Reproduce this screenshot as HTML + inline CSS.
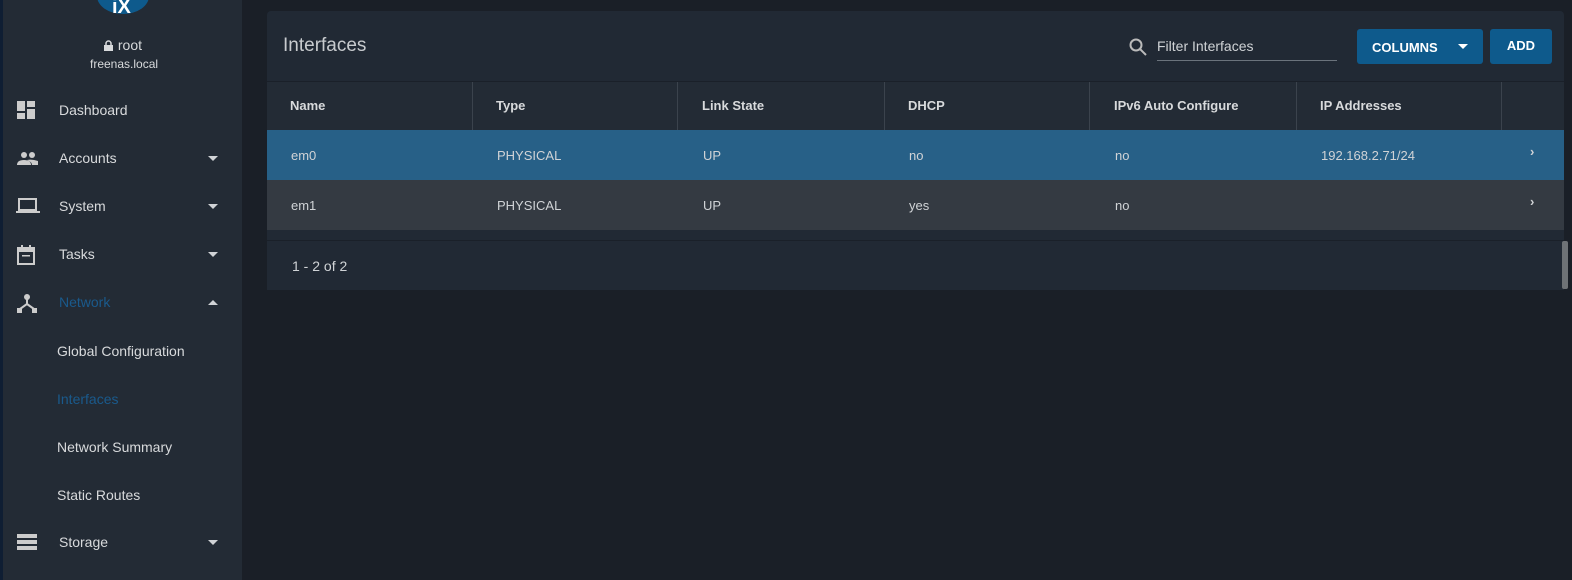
<!DOCTYPE html>
<html><head><style>
body{margin:0;width:1572px;height:580px;background:#1a1f27;font-family:"Liberation Sans",sans-serif;position:relative;overflow:hidden;color:#d0d3d6}
.sb{position:absolute;left:0;top:0;width:242px;height:580px;background:#232b35;border-left:3px solid #0f1e33;box-sizing:border-box}
.it{position:absolute;left:0;width:242px;height:48px;font-size:14px;color:#d8dadc}
.it span{position:absolute;left:56px;top:15px}
.it svg{position:absolute;left:13px;top:13px}
.car{position:absolute;left:205px;top:21px;width:0;height:0;border-left:5px solid transparent;border-right:5px solid transparent;border-top:5px solid #d0d3d6}
.sub{position:absolute;left:54px;font-size:14px;color:#d8dadc}
.card{position:absolute;left:267px;top:11px;width:1297px;height:279px;background:#212934;border-radius:4px 4px 0 0;overflow:hidden}
.th{position:absolute;top:70px;left:0;width:1297px;height:48px;background:#232b35;border-top:1px solid #1a2029}
.th div{position:absolute;top:16px;font-size:13px;font-weight:bold;color:#d8dadc}
.sep{position:absolute;top:0;width:1px;height:48px;background:#3b434d}
.row{position:absolute;left:0;width:1297px;height:50px;font-size:13px;color:#d0d3d6}
.row div{position:absolute;top:18px}
</style></head><body>
<div class="sb">
 <svg style="position:absolute;left:92px;top:-22px" width="56" height="40"><ellipse cx="28" cy="18" rx="26" ry="18" fill="#0e5a8c"/><text x="17" y="35" fill="#fff" font-size="20" font-family="Liberation Sans" font-weight="bold">iX</text></svg>
 <div style="position:absolute;left:100px;top:37px;font-size:14px;color:#d8dadc"><svg width="11" height="11" viewBox="0 0 11 11" style="vertical-align:-1px"><rect x="1" y="5" width="9" height="6" fill="#d8dadc"/><path d="M3 5V3.5a2.5 2.5 0 0 1 5 0V5" stroke="#d8dadc" stroke-width="1.5" fill="none"/></svg> root</div>
 <div style="position:absolute;left:87px;top:57px;font-size:12px;color:#d8dadc">freenas.local</div>
 <div class="it" style="top:87px"><svg width="20" height="20"><rect x="1" y="1" width="8" height="10" fill="#ccc"/><rect x="1" y="13" width="8" height="6" fill="#ccc"/><rect x="11" y="1" width="8" height="6" fill="#ccc"/><rect x="11" y="9" width="8" height="10" fill="#ccc"/></svg><span>Dashboard</span></div>
 <div class="it" style="top:135px"><svg width="24" height="20"><circle cx="8" cy="7" r="3" fill="#ccc"/><circle cx="16" cy="7" r="3" fill="#ccc"/><path d="M1 17q0-5 7-5t7 5zM11 12q5-1 11 1v4h-6q0-3-5-5z" fill="#ccc"/></svg><span>Accounts</span><i class="car"></i></div>
 <div class="it" style="top:183px"><svg width="24" height="20"><rect x="3" y="3" width="17" height="11" fill="none" stroke="#ccc" stroke-width="2"/><rect x="0" y="15" width="24" height="2" fill="#ccc"/></svg><span>System</span><i class="car"></i></div>
 <div class="it" style="top:231px"><svg width="20" height="22"><rect x="2" y="4" width="16" height="16" fill="none" stroke="#ccc" stroke-width="2"/><rect x="2" y="4" width="16" height="4" fill="#ccc"/><rect x="5" y="1" width="2" height="4" fill="#ccc"/><rect x="13" y="1" width="2" height="4" fill="#ccc"/><rect x="6" y="11" width="8" height="1.5" fill="#ccc"/></svg><span>Tasks</span><i class="car"></i></div>
 <div class="it" style="top:279px"><svg width="22" height="22"><circle cx="11" cy="5" r="3" fill="#ccc"/><path d="M11 7v5l-7 5M11 12l7 5" stroke="#ccc" stroke-width="2" fill="none"/><rect x="1" y="16" width="5" height="5" fill="#ccc"/><rect x="16" y="16" width="5" height="5" fill="#ccc"/></svg><span style="color:#1a5a8c">Network</span><i class="car" style="border-top:0;border-bottom:5px solid #d0d3d6"></i></div>
 <div class="sub" style="top:343px">Global Configuration</div>
 <div class="sub" style="top:391px;color:#1a5a8c">Interfaces</div>
 <div class="sub" style="top:439px">Network Summary</div>
 <div class="sub" style="top:487px">Static Routes</div>
 <div class="it" style="top:519px"><svg width="22" height="20"><rect x="1" y="2" width="20" height="4" fill="#ccc"/><rect x="1" y="8" width="20" height="4" fill="#ccc"/><rect x="1" y="14" width="20" height="4" fill="#ccc"/></svg><span>Storage</span><i class="car"></i></div>
</div>
<div class="card">
 <div style="position:absolute;left:16px;top:24px;font-size:19px;color:#c8cbce">Interfaces</div>
 <svg style="position:absolute;left:861px;top:26px" width="20" height="20"><circle cx="8" cy="8" r="5.5" stroke="#bbb" stroke-width="2" fill="none"/><path d="M12 12l6 6" stroke="#bbb" stroke-width="2"/></svg>
 <div style="position:absolute;left:890px;top:27px;font-size:14px;color:#d0d3d6">Filter Interfaces</div>
 <div style="position:absolute;left:890px;top:49px;width:180px;height:1px;background:#6b737c"></div>
 <div style="position:absolute;left:1090px;top:18px;width:126px;height:35px;background:#0e5a8c;border-radius:3px;color:#fff;font-size:13px;font-weight:bold"><span style="position:absolute;left:15px;top:11px">COLUMNS</span><i style="position:absolute;left:101px;top:15px;border-left:5px solid transparent;border-right:5px solid transparent;border-top:5px solid #fff"></i></div>
 <div style="position:absolute;left:1223px;top:18px;width:62px;height:35px;background:#0e5a8c;border-radius:3px;color:#fff;font-size:13px;font-weight:bold;text-align:center;line-height:33px">ADD</div>
 <div class="th">
  <div style="left:23px">Name</div><div style="left:229px">Type</div><div style="left:435px">Link State</div><div style="left:641px">DHCP</div><div style="left:847px">IPv6 Auto Configure</div><div style="left:1053px">IP Addresses</div>
  <i class="sep" style="left:205px"></i><i class="sep" style="left:410px"></i><i class="sep" style="left:617px"></i><i class="sep" style="left:822px"></i><i class="sep" style="left:1029px"></i><i class="sep" style="left:1234px"></i>
 </div>
 <div class="row" style="top:119px;background:#276087"><div style="left:24px">em0</div><div style="left:230px">PHYSICAL</div><div style="left:436px">UP</div><div style="left:642px">no</div><div style="left:848px">no</div><div style="left:1054px">192.168.2.71/24</div><div style="left:1263px;top:14px;font-weight:bold">›</div></div>
 <div class="row" style="top:169px;background:#343a42"><div style="left:24px">em1</div><div style="left:230px">PHYSICAL</div><div style="left:436px">UP</div><div style="left:642px">yes</div><div style="left:848px">no</div><div style="left:1263px;top:14px;font-weight:bold">›</div></div>
 <div style="position:absolute;top:229px;left:0;width:1297px;height:1px;background:#1a2029"></div>
 <div style="position:absolute;left:25px;top:247px;font-size:14px;color:#d0d3d6">1 - 2 of 2</div>
</div>
<div style="position:absolute;left:1562px;top:241px;width:6px;height:48px;background:#6e7276;border-radius:2px"></div>
</body></html>
